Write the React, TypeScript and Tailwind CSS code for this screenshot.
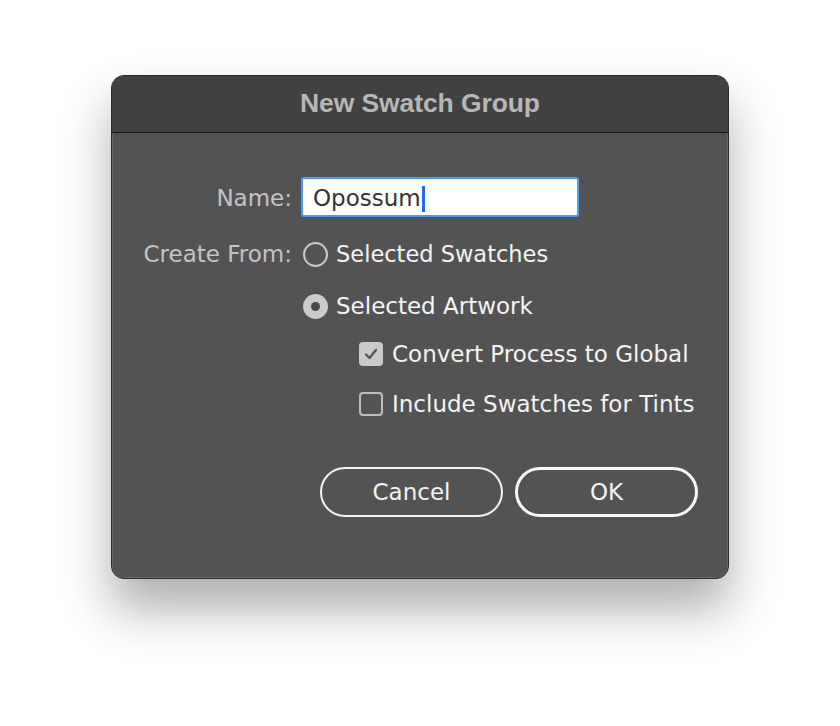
import React from "react";

const F = { fontFamily: '"DejaVu Sans", "Liberation Sans", sans-serif' };

export default function App() {
  return (
    <div className="w-[840px] h-[726px] bg-white pt-[75px] pl-[111px]">
      <div className="w-[618px] h-[504px] rounded-[13px] border border-[#2b2b2b] bg-[#535353] overflow-hidden shadow-[0_30px_50px_rgba(0,0,0,0.32),inset_0_0_0_1px_rgba(255,255,255,0.12)] flex flex-col">
        <div className="h-[57px] shrink-0 bg-[#414141] border-b border-[#151515] flex items-center justify-center">
          <span className="text-[26.5px] font-bold text-[#b7b7b7] tracking-[-0.1px]" style={{ fontFamily: '"Liberation Sans", Arial, sans-serif' }}>
            New Swatch Group
          </span>
        </div>
        <div className="flex flex-col" style={F}>
          <div className="mt-[44px] flex items-center h-[40px]">
            <div className="w-[180px] text-right text-[23px] text-[#c4c4c4] pt-[3px]">Name:</div>
            <div className="ml-[9px] w-[278px] h-[40px] rounded-[3px] border-[2px] border-[#4a9bf5] bg-white flex items-center pl-[10px] pt-[3px]">
              <span className="text-[23px] text-[#333333]">Opossum</span>
              <span className="ml-[1px] w-[3px] h-[26px] bg-[#1f6fe0]" />
            </div>
          </div>
          <div className="mt-[22px] flex items-center h-[30px]">
            <div className="w-[180px] text-right text-[23px] text-[#c4c4c4] pt-[1px]">Create From:</div>
            <div className="ml-[11px] w-[25px] h-[25px] rounded-full border-[2px] border-[#c9c9c9]" />
            <div className="ml-[8px] text-[22.5px] text-[#f4f4f4] pt-[1px]">Selected Swatches</div>
          </div>
          <div className="mt-[22px] flex items-center h-[30px]">
            <div className="w-[180px]" />
            <div className="ml-[11px] w-[25px] h-[25px] rounded-full bg-[#cbcbcb] flex items-center justify-center">
              <div className="w-[9px] h-[9px] rounded-full bg-[#4a4a4a]" />
            </div>
            <div className="ml-[8px] text-[23px] text-[#f4f4f4]">Selected Artwork</div>
          </div>
          <div className="mt-[18px] flex items-center h-[30px] pl-[247px]">
            <div className="w-[24px] h-[24px] rounded-[4px] bg-[#cacaca] flex items-center justify-center">
              <svg width="18" height="18" viewBox="0 0 18 18">
                <path d="M4 9.5 L7.5 13 L14 5" fill="none" stroke="#555555" strokeWidth="2.4" strokeLinecap="round" strokeLinejoin="round" />
              </svg>
            </div>
            <div className="ml-[9px] text-[23px] text-[#f4f4f4]">Convert Process to Global</div>
          </div>
          <div className="mt-[20px] flex items-center h-[30px] pl-[247px]">
            <div className="w-[24px] h-[24px] rounded-[4px] border-[2px] border-[#bdbdbd]" />
            <div className="ml-[9px] text-[23px] text-[#f4f4f4]">Include Swatches for Tints</div>
          </div>
          <div className="mt-[48px] flex items-center pl-[208px] gap-[12px]">
            <button className="w-[183px] h-[50px] rounded-full border-[2px] border-[#f2f2f2] text-[23px] text-[#f4f4f4]" style={F}>
              Cancel
            </button>
            <button className="w-[183px] h-[50px] rounded-full border-[3px] border-[#f8f8f8] text-[23px] text-[#f4f4f4]" style={F}>
              OK
            </button>
          </div>
        </div>
      </div>
    </div>
  );
}
